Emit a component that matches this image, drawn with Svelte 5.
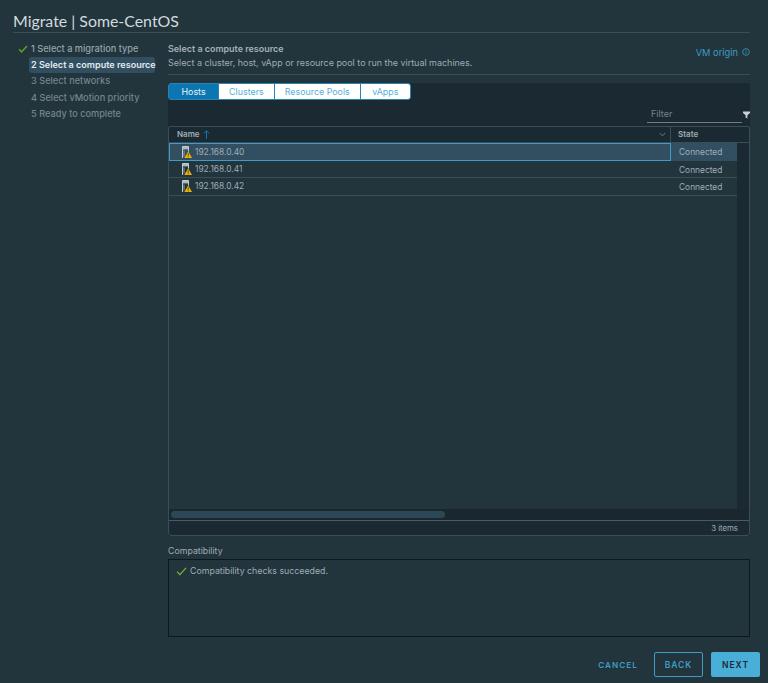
<script>
  const steps = [
    { label: '1 Select a migration type', state: 'done' },
    { label: '2 Select a compute resource', state: 'active' },
    { label: '3 Select networks', state: '' },
    { label: '4 Select vMotion priority', state: '' },
    { label: '5 Ready to complete', state: '' }
  ];
  const tabs = ['Hosts', 'Clusters', 'Resource Pools', 'vApps'];
  const hosts = ['192.168.0.40', '192.168.0.41', '192.168.0.42'];
</script>

<div class="dialog">
  <header class="title">Migrate | Some-CentOS</header>

  <div class="body">
    <nav class="steps">
      {#each steps as step}
        <div class="step {step.state}">
          {#if step.state === 'done'}
            <svg class="tick" viewBox="0 0 10 8" width="10" height="8"><path d="M1 4.2 3.6 6.8 9 1" fill="none" stroke="#5aa220" stroke-width="1.5" /></svg>
          {/if}
          <span>{step.label}</span>
        </div>
      {/each}
    </nav>

    <main class="content">
      <div class="intro">
        <div>
          <h2>Select a compute resource</h2>
          <p>Select a cluster, host, vApp or resource pool to run the virtual machines.</p>
        </div>
        <div class="origin">
          VM origin
          <svg viewBox="0 0 10 10" width="8" height="8"><circle cx="5" cy="5" r="4.2" fill="none" stroke="#3f9cc4" /><path d="M5 4.2V7.6M5 2.2V3.3" stroke="#3f9cc4" /></svg>
        </div>
      </div>

      <div class="panel">
        <div class="tabs">
          {#each tabs as tab, i}
            <div class="tab" class:on={i === 0}>{tab}</div>
          {/each}
        </div>

        <div class="filter-row">
          <div class="filter">Filter</div>
          <svg viewBox="0 0 10 10" width="7" height="8"><path d="M0 0H10V2L6.3 5.5V10L3.7 8.6V5.5L0 2Z" fill="#c8d0d4" /></svg>
        </div>

        <div class="grid">
          <div class="head">
            <div class="name-col">
              <span>Name</span>
              <svg viewBox="0 0 8 10" width="7" height="9"><path d="M4 10V1M1 3.6 4 .8 7 3.6" fill="none" stroke="#0a83c4" /></svg>
              <svg class="chev" viewBox="0 0 8 5" width="7" height="5"><path d="M.7.7 4 4 7.3.7" fill="none" stroke="#8fa0a8" stroke-width=".8" /></svg>
            </div>
            <div class="state-col">State</div>
          </div>

          <div class="rows-wrap">
            <div class="rows">
              {#each hosts as host, i}
                <div class="row" class:selected={i === 0}>
                  <div class="cell-name">
                    <svg viewBox="0 0 10 12" width="10" height="12">
                      <path d="M.5 12V.5H6.5V5.5" fill="none" stroke="#c3ccd1" />
                      <rect x="1" y="1" width="5" height="2.4" fill="#aeb9bf" />
                      <path d="M2 4.5V10.5" stroke="#8d9aa1" />
                      <path d="M6.2 5.2 10 12H2.4Z" fill="#efb300" />
                      <path d="M6.2 7.2V9.8M6.2 10.3V11.3" stroke="#22343c" stroke-width=".8" />
                    </svg>
                    <span>{host}</span>
                  </div>
                  <div class="cell-state">Connected</div>
                </div>
              {/each}
            </div>
            <div class="vscroll"></div>
          </div>

          <div class="hscroll"><div class="thumb"></div></div>
          <div class="foot">3 items</div>
        </div>
      </div>

      <div class="compat-label">Compatibility</div>
      <div class="compat">
        <svg viewBox="0 0 12 10" width="11" height="9"><path d="M1 5.2 4.2 8.5 11 1" fill="none" stroke="#7fbd2c" stroke-width="1.2" /></svg>
        <span>Compatibility checks succeeded.</span>
      </div>
    </main>
  </div>

  <footer class="actions">
    <button class="link">CANCEL</button>
    <button class="outline">BACK</button>
    <button class="primary">NEXT</button>
  </footer>
</div>

<style>
  :global(body) {
    margin: 0;
    background: #22343c;
  }
  .dialog {
    width: 768px;
    height: 683px;
    box-sizing: border-box;
    padding: 10px 18px 0 13px;
    font-family: Inter, "Liberation Sans", sans-serif;
    color: #9fadb6;
    background: #22343c;
    overflow: hidden;
  }
  .title {
    height: 22px;
    line-height: 22px;
    font-family: Lato, "Liberation Sans", sans-serif;
    font-size: 15.9px;
    color: #d3dade;
    border-bottom: 1px solid #3b4e58;
  }
  .body {
    display: flex;
    margin-top: 9px;
  }
  .steps {
    width: 142px;
    margin-right: 13px;
    padding-left: 16px;
    box-sizing: border-box;
    flex: none;
    margin-top: -1px;
  }
  .step {
    position: relative;
    height: 16px;
    margin-bottom: 0.2px;
    line-height: 16px;
    padding-left: 2px;
    font-size: 9.2px;
    font-weight: 500;
    color: #75858e;
    white-space: nowrap;
    border-radius: 3px;
  }
  .step.done {
    color: #96a4ac;
  }
  .step.active {
    background: #324f61;
    color: #e4e9ec;
    font-weight: 600;
    font-size: 9.05px;
  }
  .tick {
    position: absolute;
    left: -11px;
    top: 4px;
  }
  .content {
    width: 582px;
    flex: none;
  }
  .intro {
    display: flex;
    justify-content: space-between;
    height: 32px;
    border-bottom: 1px solid #3b4e58;
  }
  .intro h2 {
    margin: 0;
    font-size: 8.96px;
    line-height: 14px;
    font-weight: 600;
    color: #a3b1ba;
  }
  .intro p {
    margin: 0;
    font-size: 8.96px;
    line-height: 14px;
    color: #9fadb6;
  }
  .origin {
    margin-top: 3px;
    font-size: 9.3px;
    color: #3f9cc4;
    display: flex;
    gap: 4px;
    align-items: center;
    height: 14px;
  }
  .panel {
    margin-top: 8px;
    background: #1b2a32;
  }
  .tabs {
    display: flex;
    width: max-content;
    background: #0f6ea8;
    border: 1px solid #2a82b5;
    border-radius: 3px;
    overflow: hidden;
  }
  .tab {
    height: 15px;
    line-height: 15px;
    padding: 0 10px;
    font-size: 8.9px;
    color: #5aaed6;
    background: #fff;
    border-left: 1px solid #2a82b5;
  }
  .tab:last-child {
    padding: 0 11.5px;
  }
  .tab.on {
    background: #0c76b3;
    color: #e9f2f7;
    border-left: 0;
    padding: 0 12.5px;
  }
  .filter-row {
    height: 25px;
    display: flex;
    justify-content: flex-end;
    align-items: flex-end;
    gap: 1px;
  }
  .filter-row svg {
    margin-bottom: 6px;
  }
  .filter {
    width: 95px;
    height: 16px;
    margin-bottom: 2px;
    line-height: 14px;
    font-size: 9px;
    color: #75858e;
    border-bottom: 1px solid #6f7f88;
    box-sizing: border-box;
    padding-left: 4px;
  }
  .grid {
    border: 1px solid #3b4e58;
    border-radius: 2px 2px 3px 3px;
    margin-top: 1px;
  }
  .head {
    display: flex;
    height: 16px;
    box-sizing: border-box;
    font-size: 8px;
    font-weight: 600;
    color: #9fadb6;
    line-height: 15px;
    border-bottom: 1px solid #3b4e58;
  }
  .name-col {
    width: 502px;
    box-sizing: border-box;
    padding-left: 8px;
    display: flex;
    align-items: center;
    gap: 3px;
    border-right: 1px solid #3b4e58;
  }
  .chev {
    margin-left: auto;
    margin-right: 4px;
  }
  .state-col {
    padding-left: 7px;
  }
  .rows-wrap {
    display: flex;
    height: 366px;
  }
  .rows {
    width: 568px;
    background: #22343c;
  }
  .vscroll {
    flex: 1;
    background: #1b2a32;
  }
  .row {
    display: flex;
    height: 17.5px;
    box-sizing: border-box;
    border-bottom: 1px solid #3b4e58;
    font-size: 8.4px;
    line-height: 16.5px;
  }
  .row.selected {
    background: #324f61;
    border-bottom: 0;
  }
  .cell-name {
    width: 502px;
    box-sizing: border-box;
    padding-left: 13px;
    display: flex;
    align-items: center;
    gap: 3px;
  }
  .row.selected .cell-name {
    border: 1px solid #3f9cc4;
    padding-left: 12px;
  }
  .cell-state {
    padding-left: 8px;
    line-height: 18px;
  }
  .hscroll {
    height: 12px;
    padding: 2px;
    box-sizing: border-box;
    background: #1a272e;
    border-bottom: 1px solid #4a5c66;
  }
  .thumb {
    width: 274px;
    height: 7px;
    border-radius: 4px;
    background: #2e4757;
  }
  .foot {
    height: 14px;
    line-height: 14px;
    text-align: right;
    font-size: 7.8px;
    padding-right: 11px;
    color: #9fadb6;
  }
  .compat-label {
    margin-top: 8px;
    height: 14px;
    line-height: 14px;
    font-size: 8.8px;
    color: #9fadb6;
  }
  .compat {
    height: 78px;
    margin-top: 1px;
    box-sizing: border-box;
    border: 1px solid #0e181d;
    padding: 5px 7px;
    display: flex;
    align-items: flex-start;
    gap: 3px;
    font-size: 8.8px;
    line-height: 12px;
    color: #9fadb6;
  }
  .compat svg {
    margin-top: 2px;
  }
  .actions {
    display: flex;
    justify-content: flex-end;
    gap: 8px;
    margin-top: 15px;
    margin-right: -10px;
  }
  button {
    height: 25px;
    width: 49px;
    padding: 0;
    font-family: inherit;
    font-size: 8.5px;
    font-weight: 600;
    letter-spacing: 1px;
    border-radius: 2px;
    border: 1px solid transparent;
    background: none;
    color: #3f9cc4;
  }
  .outline {
    border-color: #3f9cc4;
  }
  .link {
    width: 56px;
    font-size: 8.2px;
  }
  .primary {
    background: #49afd9;
    color: #1b2a32;
  }
</style>
